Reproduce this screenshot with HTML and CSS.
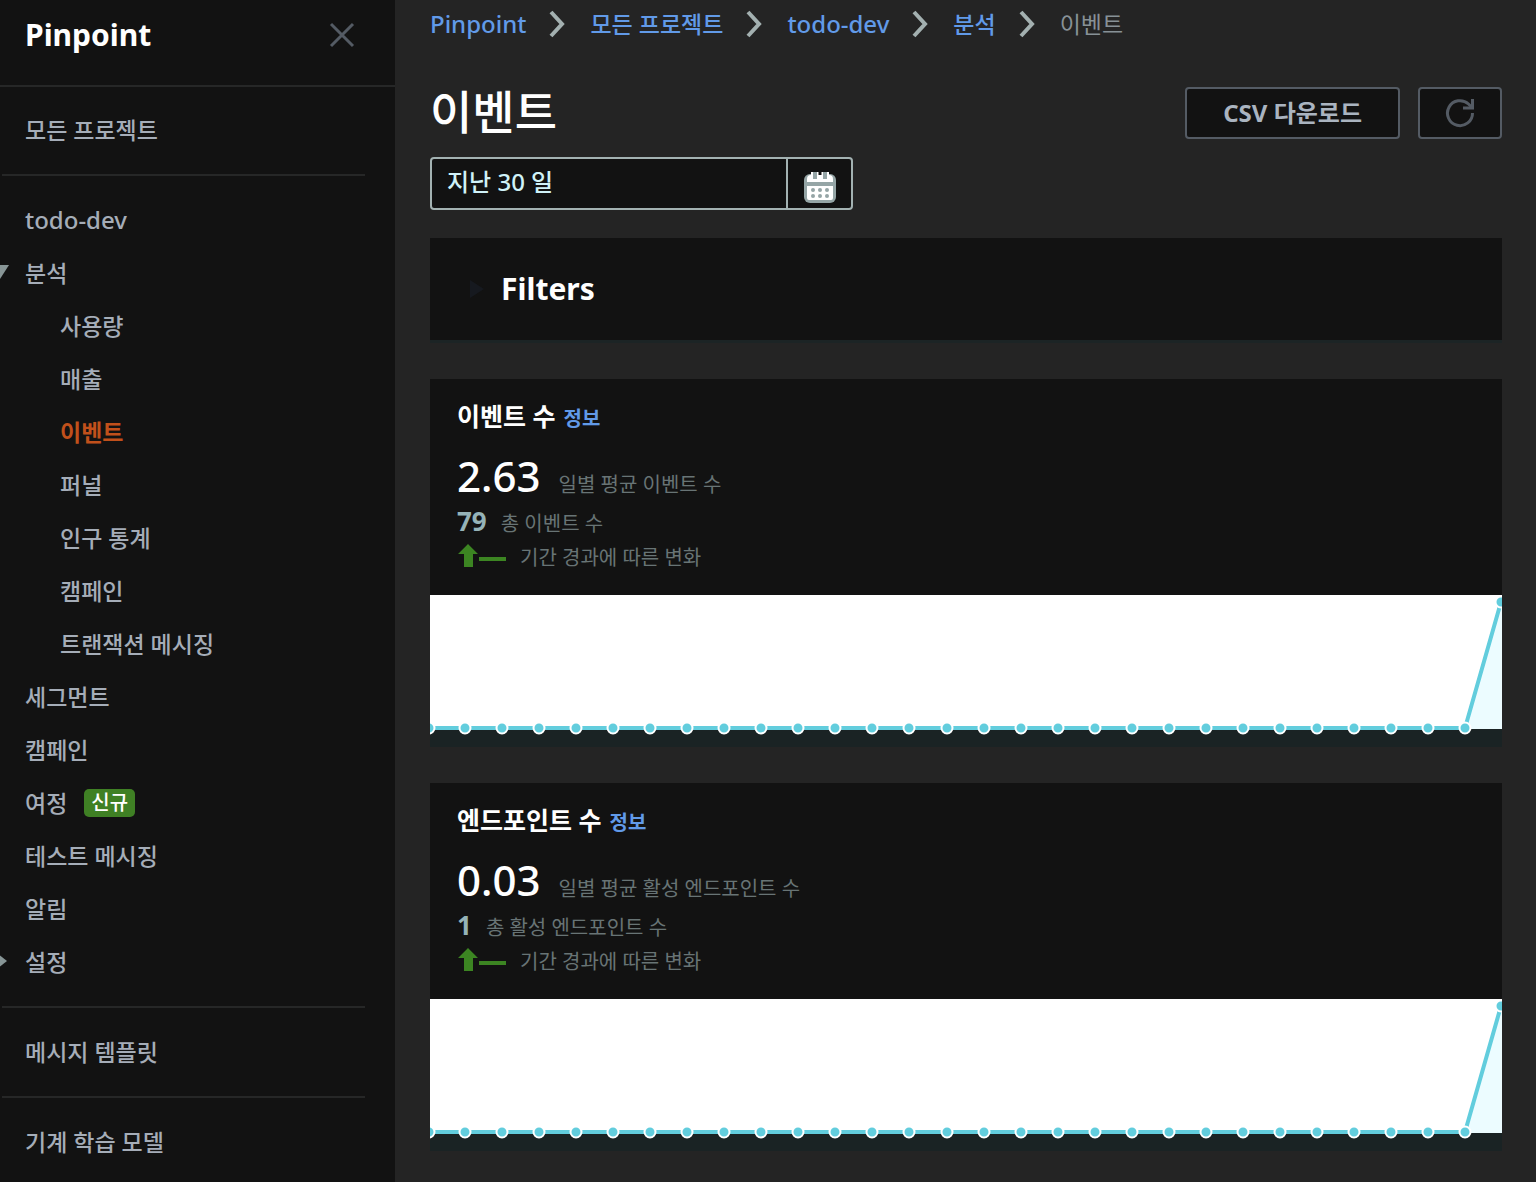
FILE: index.html
```html
<!DOCTYPE html>
<html lang="ko">
<head>
<meta charset="utf-8">
<meta name="viewport" content="width=device-width, initial-scale=1">
<title>Pinpoint - 이벤트</title>
<link rel="stylesheet" href="styles.css">
</head>
<body>
<div class="layout">
  <aside class="sidebar">
    <header class="sidebar-header">
      <h2 class="sidebar-title">Pinpoint</h2>
      <button class="close-button" type="button" aria-label="닫기">
        <svg width="26" height="26" viewBox="0 0 26 26"><path d="M2 2L24 24M24 2L2 24" fill="none" stroke="currentColor" stroke-width="3"/></svg>
      </button>
    </header>
    <nav class="nav" aria-label="Pinpoint">
      <ul class="nav-list">
        <li><a class="nav-link" href="#">모든 프로젝트</a></li>
      </ul>
      <hr class="nav-divider">
      <ul class="nav-list">
        <li><a class="nav-link latin" href="#">todo-dev</a></li>
        <li class="nav-group">
          <svg class="nav-arrow" width="10" height="16" viewBox="0 0 10 16"><path d="M-9 1H9L0 15Z" fill="currentColor"/></svg>
          <a class="nav-link" href="#">분석</a>
          <ul class="nav-list nav-sublist">
            <li><a class="nav-link" href="#">사용량</a></li>
            <li><a class="nav-link" href="#">매출</a></li>
            <li><a class="nav-link active" href="#" aria-current="page">이벤트</a></li>
            <li><a class="nav-link" href="#">퍼널</a></li>
            <li><a class="nav-link" href="#">인구 통계</a></li>
            <li><a class="nav-link" href="#">캠페인</a></li>
            <li><a class="nav-link" href="#">트랜잭션 메시징</a></li>
          </ul>
        </li>
        <li><a class="nav-link" href="#">세그먼트</a></li>
        <li><a class="nav-link" href="#">캠페인</a></li>
        <li><a class="nav-link" href="#">여정 <span class="badge">신규</span></a></li>
        <li><a class="nav-link" href="#">테스트 메시징</a></li>
        <li><a class="nav-link" href="#">알림</a></li>
        <li class="nav-group">
          <svg class="nav-arrow" width="10" height="16" viewBox="0 0 10 16"><path d="M-6 -2L7 8L-6 18Z" fill="currentColor"/></svg>
          <a class="nav-link" href="#">설정</a>
        </li>
      </ul>
      <hr class="nav-divider">
      <ul class="nav-list">
        <li><a class="nav-link" href="#">메시지 템플릿</a></li>
      </ul>
      <hr class="nav-divider">
      <ul class="nav-list">
        <li><a class="nav-link" href="#">기계 학습 모델</a></li>
      </ul>
    </nav>
  </aside>

  <main class="main">
    <nav class="breadcrumbs" aria-label="탐색 경로">
      <a class="latin" href="#">Pinpoint</a>
      <svg class="chevron" width="16" height="28" viewBox="0 0 16 28"><path d="M2 2L13 14L2 26" fill="none" stroke="currentColor" stroke-width="4"/></svg>
      <a href="#">모든 프로젝트</a>
      <svg class="chevron" width="16" height="28" viewBox="0 0 16 28"><path d="M2 2L13 14L2 26" fill="none" stroke="currentColor" stroke-width="4"/></svg>
      <a class="latin" href="#">todo-dev</a>
      <svg class="chevron" width="16" height="28" viewBox="0 0 16 28"><path d="M2 2L13 14L2 26" fill="none" stroke="currentColor" stroke-width="4"/></svg>
      <a href="#">분석</a>
      <svg class="chevron" width="16" height="28" viewBox="0 0 16 28"><path d="M2 2L13 14L2 26" fill="none" stroke="currentColor" stroke-width="4"/></svg>
      <span class="current">이벤트</span>
    </nav>

    <div class="page-header">
      <h1 class="page-title">이벤트</h1>
      <div class="actions">
        <button class="button" type="button">CSV 다운로드</button>
        <button class="button button-icon" type="button" aria-label="새로 고침">
          <svg width="32" height="32" viewBox="0 0 32 32" fill="none" stroke="currentColor"><path d="M28.500 16A12.500 12.500 0 1 1 24.500 7L28 10.500" stroke-width="3"/><path d="M28.500 2V11H19" stroke-width="3"/></svg>
        </button>
      </div>
    </div>

    <div class="date-field">
      <input class="date-input" type="text" value="지난 30 일" aria-label="기간" readonly>
      <button class="date-button" type="button" aria-label="달력 열기">
        <svg width="32" height="32" viewBox="0 0 32 32">
          <rect y="3" width="32" height="29" rx="6" fill="#95a5a6"/>
          <path d="M3 11V8Q3 4 7 4H25Q29 4 29 8V11ZM3 15H29V27Q29 29 27 29H5Q3 29 3 27Z" fill="#fff"/>
          <path d="M7 1H25V7H7Z" fill="#fff"/>
          <path d="M11 1V8M21 1V8" stroke="#95a5a6" stroke-width="4"/>
          <path d="M16 1V4" stroke="#121212" stroke-width="3"/>
          <g fill="#95a5a6"><circle cx="9" cy="19" r="2"/><circle cx="16" cy="19" r="2"/><circle cx="23" cy="19" r="2"/><circle cx="9" cy="25" r="2"/><circle cx="16" cy="25" r="2"/><circle cx="23" cy="25" r="2"/></g>
        </svg>
      </button>
    </div>

    <section class="filters">
      <button class="filters-toggle" type="button" aria-expanded="false">
        <svg width="16" height="20" viewBox="0 0 16 20"><path d="M1 1L15 10L1 19Z" fill="#16191f"/></svg>
        Filters
      </button>
    </section>

    <section class="card">
      <div class="card-body">
        <h2 class="card-title">이벤트 수 <a class="info" href="#">정보</a></h2>
        <p class="stat stat-large"><strong>2.63</strong> <span>일별 평균 이벤트 수</span></p>
        <p class="stat stat-total"><strong>79</strong> <span>총 이벤트 수</span></p>
        <p class="stat stat-change">
          <svg width="49" height="26" viewBox="0 0 49 26" fill="#3c8522"><path d="M11 1L21 11H16V24H7V11H1Z"/><path d="M22 14H49V18H22Z"/></svg>
          <span>기간 경과에 따른 변화</span>
        </p>
      </div>
      <svg class="chart" viewBox="0 0 1072 152" role="img" aria-label="이벤트 수">
        <defs>
          <marker id="dot" markerUnits="userSpaceOnUse" markerWidth="14" markerHeight="14" refX="7" refY="7"><circle cx="7" cy="7" r="5.500" fill="#62cddd" stroke="#fff" stroke-width="2"/></marker>
        </defs>
        <rect width="1072" height="134" fill="#fff"/>
        <rect y="134" width="1072" height="18" fill="#1a2324"/>
        <path d="M1035 134L1070 7H1072V134Z" fill="#ecfcff"/>
        <polyline class="chart-line" points="-1,133 35,133 72,133 109,133 146,133 183,133 220,133 257,133 294,133 331,133 368,133 405,133 442,133 479,133 517,133 554,133 591,133 628,133 665,133 702,133 739,133 776,133 813,133 850,133 887,133 924,133 961,133 998,133 1035,133 1071,7"/>
      </svg>
    </section>

    <section class="card">
      <div class="card-body">
        <h2 class="card-title">엔드포인트 수 <a class="info" href="#">정보</a></h2>
        <p class="stat stat-large"><strong>0.03</strong> <span>일별 평균 활성 엔드포인트 수</span></p>
        <p class="stat stat-total"><strong>1</strong> <span>총 활성 엔드포인트 수</span></p>
        <p class="stat stat-change">
          <svg width="49" height="26" viewBox="0 0 49 26" fill="#3c8522"><path d="M11 1L21 11H16V24H7V11H1Z"/><path d="M22 14H49V18H22Z"/></svg>
          <span>기간 경과에 따른 변화</span>
        </p>
      </div>
      <svg class="chart" viewBox="0 0 1072 152" role="img" aria-label="엔드포인트 수">
        <rect width="1072" height="134" fill="#fff"/>
        <rect y="134" width="1072" height="18" fill="#1a2324"/>
        <path d="M1035 134L1070 7H1072V134Z" fill="#ecfcff"/>
        <polyline class="chart-line" points="-1,133 35,133 72,133 109,133 146,133 183,133 220,133 257,133 294,133 331,133 368,133 405,133 442,133 479,133 517,133 554,133 591,133 628,133 665,133 702,133 739,133 776,133 813,133 850,133 887,133 924,133 961,133 998,133 1035,133 1071,7"/>
      </svg>
    </section>
  </main>
</div>
</body>
</html>
```
FILE: styles.css
```css
* {
  box-sizing: border-box;
}

body {
  margin: 0;
  background: #242424;
  color: #fff;
  font-family: "Noto Sans", "Noto Sans CJK KR", sans-serif;
  font-size: 23px;
  font-weight: 500;
  line-height: 32px;
}

a {
  color: #619ae8;
  text-decoration: none;
}

h1,
h2,
p,
ul {
  margin: 0;
  padding: 0;
}

button,
input {
  font: inherit;
}

svg {
  display: block;
  flex: none;
}

.latin {
  font-size: 24px;
}

.layout {
  display: grid;
  grid-template-columns: 395px minmax(0, 1fr);
  min-height: 100vh;
}

/* Sidebar */

.sidebar {
  background: #121212;
}

.sidebar-header {
  display: flex;
  align-items: center;
  justify-content: space-between;
  height: 87px;
  padding: 0 40px 16px 25px;
  border-bottom: 2px solid #262727;
}

.sidebar-title {
  font-size: 30px;
  line-height: 40px;
}

.close-button {
  padding: 0;
  border: 0;
  background: none;
  color: #545b64;
}

.nav {
  padding: 16px 0 12px;
}

.nav-list {
  list-style: none;
}

.nav-sublist {
  padding-left: 35px;
}

.nav-link {
  display: flex;
  align-items: center;
  gap: 17px;
  height: 53px;
  padding-left: 25px;
  color: #a5adb8;
}

.nav-link.active {
  color: #c1501b;
  font-weight: 700;
}

.nav-divider {
  height: 2px;
  margin: 18px 30px 17px 2px;
  border: 0;
  background: #262727;
}

.nav-group {
  position: relative;
}

.nav-arrow {
  position: absolute;
  top: 18px;
  left: 0;
  color: #879596;
}

.badge {
  padding: 0 7px;
  border-radius: 5px;
  background: #3f8024;
  color: #fff;
  font-size: 20px;
  line-height: 28px;
}

/* Main column */

.main {
  padding: 0 34px 30px 35px;
}

.breadcrumbs {
  display: flex;
  align-items: center;
  height: 48px;
}

.chevron {
  margin: 0 25px 0 23px;
  color: #a3b0b0;
}

.current {
  color: #879196;
  font-weight: 400;
}

.page-header {
  display: flex;
  align-items: flex-start;
  justify-content: space-between;
  height: 52px;
  margin-top: 39px;
}

.page-title {
  font-size: 46px;
  font-weight: 500;
  line-height: 48px;
}

.actions {
  display: flex;
  gap: 18px;
}

.button {
  display: flex;
  align-items: center;
  justify-content: center;
  height: 52px;
  padding: 0 36px;
  border: 2px solid #545b64;
  border-radius: 4px;
  background: #121212;
  color: #aab4c0;
  font-size: 24px;
  font-weight: 700;
}

.button-icon {
  padding: 0 24px;
  color: #545b64;
}

.date-field {
  display: flex;
  width: 423px;
  height: 53px;
  margin-top: 18px;
  border: 2px solid #a3b2b2;
  border-radius: 4px;
  background: #121212;
}

.date-input {
  flex: 1;
  min-width: 0;
  padding: 0 15px 3px;
  border: 0;
  background: none;
  color: #d0f2f8;
  font-size: 24px;
}

.date-button {
  display: flex;
  align-items: center;
  padding: 7px 15px 0 16px;
  border: 0;
  border-left: 2px solid #a3b2b2;
  background: none;
}

.filters {
  margin-top: 28px;
  background: #121212;
  border-bottom: 3px solid #1c2425;
}

.filters-toggle {
  display: flex;
  align-items: center;
  gap: 16px;
  width: 100%;
  height: 102px;
  padding: 0 39px;
  border: 0;
  background: none;
  color: #fff;
  font-size: 30px;
  font-weight: 700;
}

/* Metric cards */

.card {
  margin-top: 36px;
  background: #121212;
}

.card-body {
  padding: 19px 27px 20px;
}

.card-title {
  display: flex;
  align-items: baseline;
  gap: 8px;
  font-size: 25px;
  line-height: 36px;
}

.info,
.stat {
  font-size: 20px;
}

.stat {
  display: flex;
  align-items: baseline;
  gap: 14px;
  line-height: 34px;
  color: #687475;
  font-weight: 400;
}

.stat-large {
  gap: 18px;
  margin-top: 20px;
  line-height: 38px;
}

.stat-large strong {
  color: #fff;
  font-size: 42px;
  font-weight: 500;
}

.stat-total strong {
  color: #95b3b8;
  font-size: 26px;
}

.stat-change {
  align-items: center;
}

.stat-change svg {
  margin-bottom: 4px;
}

.chart {
  width: 100%;
  height: auto;
}

.chart-line {
  fill: none;
  stroke: #62cddd;
  stroke-width: 4;
  marker: url(#dot);
}
```
